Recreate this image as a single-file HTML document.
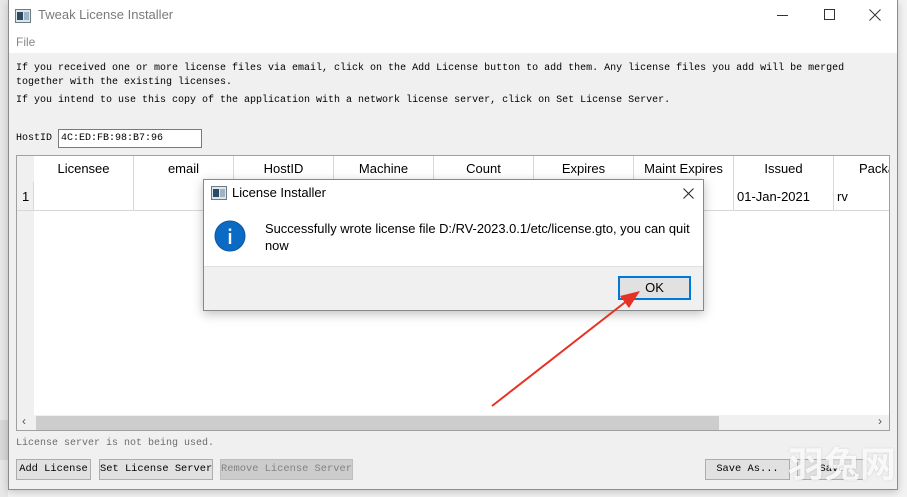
<!DOCTYPE html>
<html><head><style>
*{margin:0;padding:0;box-sizing:border-box}
html,body{width:907px;height:497px;overflow:hidden}
body{position:relative;background:#fff;font-family:"Liberation Sans",sans-serif}
.a{position:absolute}
.mono{font-family:"Liberation Mono","Noto Serif CJK SC",monospace;font-size:10px;color:#000;white-space:nowrap}
.hd{position:absolute;top:0;height:26px;border-right:1px solid #d8d8d8;font-size:13px;text-align:center;line-height:26px;color:#000}
.btn{position:absolute;height:21px;border:1px solid #adadad;background:#e1e1e1;font-family:"Liberation Mono",monospace;font-size:10.4px;line-height:19px;text-align:center;white-space:nowrap;overflow:hidden}
</style></head><body>
<div class="a" style="left:0;top:0;width:907px;height:497px;background:#f3f3f3"></div>
<div class="a" style="left:0;top:0;width:8px;height:497px;background:#e8e8e8"></div>
<div class="a" style="left:0;top:420px;width:8px;height:40px;background:#d8d8d8"></div>
<div class="a" style="left:8px;top:0;width:890px;height:490px;background:#f0f0f0;border:1px solid #8c8c8c;box-shadow:0 2px 8px rgba(0,0,0,.2)"></div>
<div class="a" style="left:9px;top:0;width:888px;height:53px;background:#fff"></div>
<svg class="a" style="left:15px;top:9px" width="16" height="14"><rect x="0.5" y="0.5" width="15" height="13" fill="#dfe6ea" stroke="#6b7b86"/><rect x="2" y="3" width="6" height="8" fill="#2a4b66"/><rect x="9" y="3" width="5" height="8" fill="#9fb3c2"/></svg>
<div class="a" style="left:38px;top:7px;font-size:13px;color:#7a7a7a">Tweak License Installer</div>
<div class="a" style="left:777px;top:15px;width:11px;height:1px;background:#333"></div>
<div class="a" style="left:824px;top:9px;width:11px;height:11px;border:1px solid #333"></div>
<svg class="a" style="left:869px;top:9px" width="12" height="12"><path d="M0.5 0.5L11.5 11.5M11.5 0.5L0.5 11.5" stroke="#333" stroke-width="1"/></svg>
<div class="a" style="left:16px;top:35px;font-size:12px;color:#888">File</div>
<div class="a mono" style="left:16px;top:63px">If you received one or more license files via email, click on the Add License button to add them. Any license files you add will be merged</div>
<div class="a mono" style="left:16px;top:77px">together with the existing licenses.</div>
<div class="a mono" style="left:16px;top:95px">If you intend to use this copy of the application with a network license server, click on Set License Server.</div>
<div class="a mono" style="left:16px;top:133px">HostID</div>
<div class="a mono" style="left:58px;top:129px;width:144px;height:19px;background:#fff;border:1px solid #7a7a7a;padding:2px 2px;line-height:13px">4C:ED:FB:98:B7:96</div>
<div class="a" style="left:16px;top:155px;width:874px;height:276px;background:#fff;border:1px solid #a0a0a0;overflow:hidden">
 <div class="a" style="left:0;top:0;width:17px;height:276px;background:#f0f0f0"></div>
 <div class="hd" style="left:17px;width:100px">Licensee</div>
 <div class="hd" style="left:117px;width:100px">email</div>
 <div class="hd" style="left:217px;width:100px">HostID</div>
 <div class="hd" style="left:317px;width:100px">Machine</div>
 <div class="hd" style="left:417px;width:100px">Count</div>
 <div class="hd" style="left:517px;width:100px">Expires</div>
 <div class="hd" style="left:617px;width:100px">Maint Expires</div>
 <div class="hd" style="left:717px;width:100px">Issued</div>
 <div class="hd" style="left:817px;width:100px;text-align:left;padding-left:25px">Packages</div>
 <div class="a" style="left:0;top:26px;width:874px;height:29px;border-bottom:1px solid #d8d8d8"></div>
 <div class="a" style="left:0;top:26px;width:17px;height:29px;border-right:1px solid #d8d8d8;font-size:13px;line-height:29px;padding-left:5px">1</div>
 <div class="a" style="left:116px;top:26px;width:1px;height:29px;background:#d8d8d8"></div>
 <div class="a" style="left:716px;top:26px;width:1px;height:29px;background:#d8d8d8"></div>
 <div class="a" style="left:816px;top:26px;width:1px;height:29px;background:#d8d8d8"></div>
 <div class="a" style="left:720px;top:33px;font-size:13px">01-Jan-2021</div>
 <div class="a" style="left:820px;top:33px;font-size:13px">rv</div>
 <div class="a" style="left:0;top:259px;width:874px;height:17px;background:#f0f0f0"></div>
 <div class="a" style="left:19px;top:260px;width:683px;height:15px;background:#cdcdcd"></div>
 <div class="a" style="left:5px;top:258px;font-size:12px;color:#555">‹</div>
 <div class="a" style="left:861px;top:258px;font-size:12px;color:#555">›</div>
</div>
<div class="a mono" style="left:16px;top:438px;color:#6d6d6d">License server is not being used.</div>
<div class="btn" style="left:16px;top:459px;width:75px">Add License</div>
<div class="btn" style="left:99px;top:459px;width:114px">Set License Server</div>
<div class="btn" style="left:220px;top:459px;width:133px;background:#ccc;border-color:#bfbfbf;color:#838383">Remove License Server</div>
<div class="btn" style="left:705px;top:459px;width:85px">Save As...</div>
<div class="btn" style="left:797px;top:459px;width:70px">Save</div>
<div class="a" style="left:788px;top:440px;white-space:nowrap;font-family:'Noto Sans CJK SC',sans-serif;font-size:36px;line-height:44px;font-weight:bold;color:rgba(255,255,255,.85);text-shadow:0 0 2px rgba(0,0,0,.15)">羽兔网</div>
<div class="a" style="left:203px;top:179px;width:501px;height:132px;background:#f0f0f0;border:1px solid #888;box-shadow:0 3px 10px rgba(0,0,0,.25)"></div>
<div class="a" style="left:204px;top:180px;width:499px;height:87px;background:#fff;border-bottom:1px solid #dfdfdf"></div>
<svg class="a" style="left:211px;top:186px" width="16" height="14"><rect x="0.5" y="0.5" width="15" height="13" fill="#dfe6ea" stroke="#6b7b86"/><rect x="2" y="3" width="6" height="8" fill="#2a4b66"/><rect x="9" y="3" width="5" height="8" fill="#9fb3c2"/></svg>
<div class="a" style="left:232px;top:185px;font-size:13px;color:#000">License Installer</div>
<svg class="a" style="left:683px;top:188px" width="11" height="11"><path d="M0.5 0.5L10.5 10.5M10.5 0.5L0.5 10.5" stroke="#222"/></svg>
<svg class="a" style="left:214px;top:220px" width="32" height="32"><circle cx="16" cy="16" r="15" fill="#0b6bc4" stroke="#0a58a0"/><rect x="14.8" y="13" width="2.4" height="11" fill="#fff"/><rect x="14.8" y="8.5" width="2.4" height="2.4" fill="#fff"/></svg>
<div class="a" style="left:265px;top:220px;width:435px;font-size:12.9px;line-height:17px;color:#000">Successfully wrote license file D:/RV-2023.0.1/etc/license.gto, you can quit now</div>
<div class="a" style="left:618px;top:276px;width:73px;height:24px;border:2px solid #0078d7;background:#e1e1e1;font-size:13px;text-align:center;line-height:20px">OK</div>
<svg class="a" style="left:0;top:0" width="907" height="497"><line x1="492" y1="406" x2="628" y2="300" stroke="#e53224" stroke-width="2"/><polygon points="640,291 620,296 629,308" fill="#e53224"/></svg>
</body></html>
